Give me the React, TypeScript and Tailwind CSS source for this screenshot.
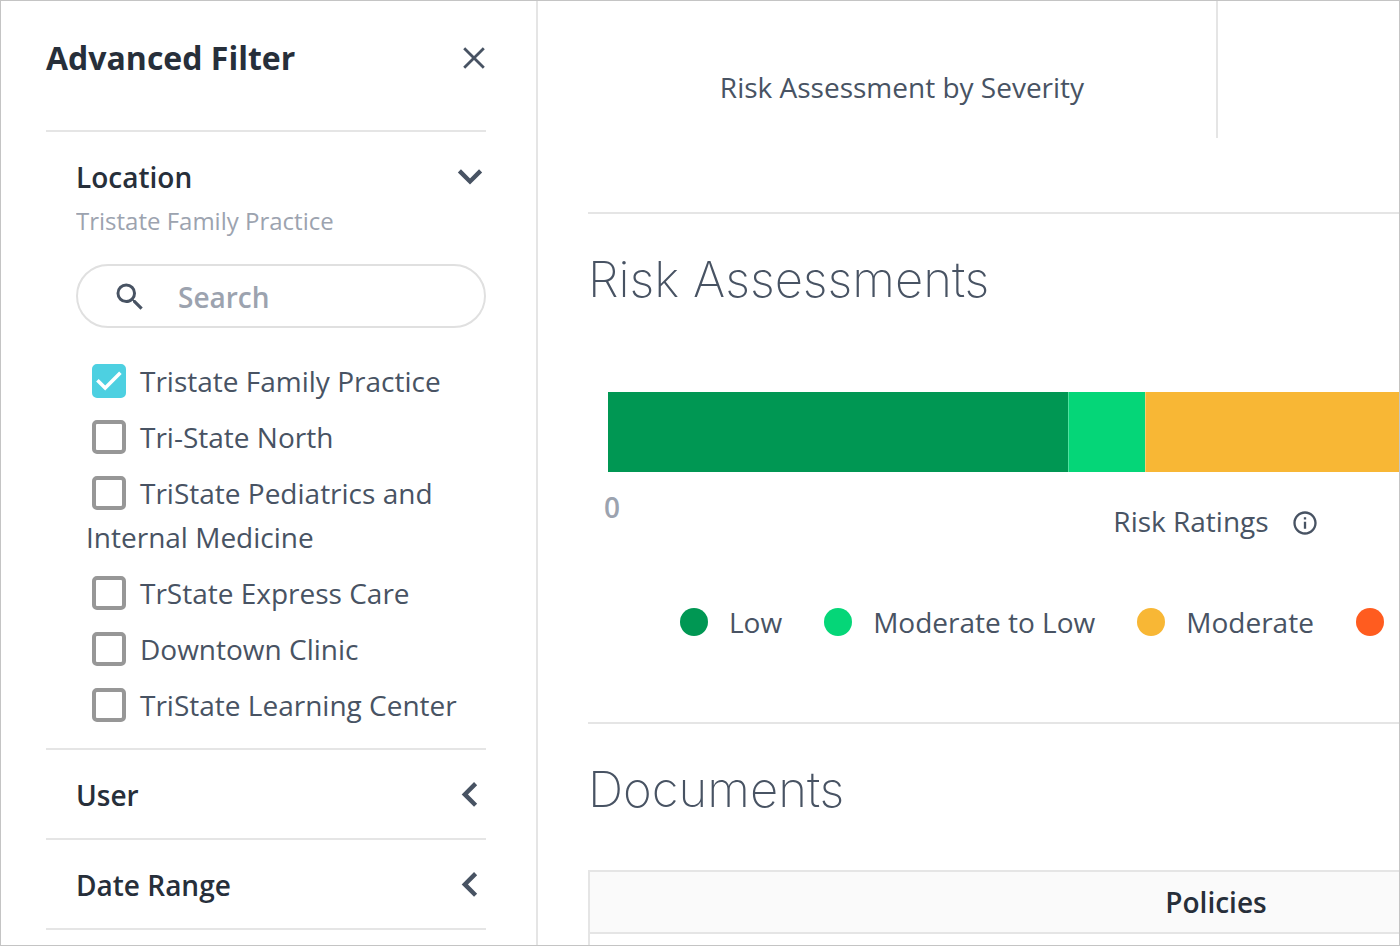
import React, { useState } from 'react';
import { MdOutlineInfo, MdSearch } from 'react-icons/md';

interface Segment {
  label: string;
  color: string;
  value: number;
}

const LOCATIONS = [
  'Tristate Family Practice',
  'Tri-State North',
  'TriState Pediatrics and Internal Medicine',
  'TrState Express Care',
  'Downtown Clinic',
  'TriState Learning Center',
];

const RATINGS: Segment[] = [
  { label: 'Low', color: '#009753', value: 460 },
  { label: 'Moderate to Low', color: '#05d678', value: 77 },
  { label: 'Moderate', color: '#f8b735', value: 460 },
  { label: '', color: '#ff5c1f', value: 219 },
];

const CloseIcon = () => (
  <svg width="24" height="24" viewBox="0 0 24 24" fill="none" stroke="currentColor" strokeWidth="2.8">
    <path d="M2.2 2.2 21.8 21.8M21.8 2.2 2.2 21.8" />
  </svg>
);

const Chevron: React.FC<{ open: boolean }> = ({ open }) => (
  <svg width="32" height="32" viewBox="0 0 32 32" fill="none" stroke="currentColor" strokeWidth="4.4">
    <path d={open ? 'M5.4 9.9 16 20.5 26.6 9.9' : 'M21.6 4.6 10.8 15.4 21.6 26.2'} />
  </svg>
);

const CheckIcon = () => (
  <svg
    width="34"
    height="34"
    viewBox="0 0 34 34"
    fill="none"
    stroke="currentColor"
    strokeWidth="3.6"
    className="pointer-events-none absolute inset-0 text-white"
  >
    <path d="M5.4 16.2 13.2 24 28.4 8.8" />
  </svg>
);

interface FilterSectionProps {
  title: string;
  open: boolean;
  onToggle: () => void;
  children?: React.ReactNode;
}

const FilterSection: React.FC<FilterSectionProps> = ({ title, open, onToggle, children }) => (
  <section className="border-b-2 border-[#e5e5e5] pl-[30px]">
    <h3>
      <button
        type="button"
        onClick={onToggle}
        aria-expanded={open}
        className={`flex w-full items-center justify-between pt-[23px] text-left text-[28px] leading-[44px] font-semibold text-[#272f3a] ${
          open ? '' : 'pb-[21px]'
        }`}
      >
        {title}
        <span className="text-[#485363]">
          <Chevron open={open} />
        </span>
      </button>
    </h3>
    {open && children}
  </section>
);

export const App: React.FC = () => {
  const [openSection, setOpenSection] = useState<string | null>('Location');
  const [selected, setSelected] = useState<string[]>(['Tristate Family Practice']);
  const [query, setQuery] = useState('');

  const total = RATINGS.reduce((sum, r) => sum + r.value, 0);
  const visible = LOCATIONS.filter((l) => l.toLowerCase().includes(query.toLowerCase()));

  const toggleSection = (name: string) => {
    setOpenSection(openSection === name ? null : name);
  };

  const toggleLocation = (name: string) => {
    setSelected(selected.includes(name) ? selected.filter((l) => l !== name) : [...selected, name]);
  };

  return (
    <div className="flex h-screen overflow-hidden border border-[#c4c4c4] bg-white font-['Open_Sans',sans-serif] text-[28px] text-[#485363]">
      {/* Filter panel */}
      <aside className="w-[537px] shrink-0 border-r-2 border-[#e5e5e5] pr-[50px] pl-[45px]">
        <div className="flex items-center justify-between border-b-2 border-[#e5e5e5] pt-[35px] pb-[50px]">
          <h2 className="text-[32px] leading-[44px] font-bold text-[#272f3a]">Advanced Filter</h2>
          <button type="button" aria-label="Close">
            <CloseIcon />
          </button>
        </div>

        <FilterSection
          title="Location"
          open={openSection === 'Location'}
          onToggle={() => toggleSection('Location')}
        >
          <p className="truncate text-2xl leading-[44px] text-[#9ca3af]">{selected.join(', ')}</p>
          <label className="mt-[21px] flex h-16 items-center gap-[30px] rounded-full border-2 border-[#e0e0e0] pt-[2px] pr-6 pl-[34px]">
            <MdSearch size={36} className="shrink-0" />
            <input
              type="text"
              aria-label="Search"
              placeholder="Search"
              value={query}
              onChange={(e) => setQuery(e.target.value)}
              className="w-full min-w-0 font-semibold outline-none placeholder:text-[#9ca3af]"
            />
          </label>
          <ul className="mt-[31px] flex flex-col gap-3 pb-[21px] pl-[10px]">
            {visible.map((name) => (
              <li key={name}>
                <label className="block leading-[44px]">
                  <span className="relative mr-[14px] ml-[6px] inline-block size-[34px] align-[-6px]">
                    <input
                      type="checkbox"
                      checked={selected.includes(name)}
                      onChange={() => toggleLocation(name)}
                      className="block size-[34px] appearance-none rounded-[5px] border-4 border-[#979797] checked:border-[#4dd0e1] checked:bg-[#4dd0e1]"
                    />
                    {selected.includes(name) && <CheckIcon />}
                  </span>
                  {name}
                </label>
              </li>
            ))}
          </ul>
        </FilterSection>

        <FilterSection title="User" open={openSection === 'User'} onToggle={() => toggleSection('User')} />
        <FilterSection
          title="Date Range"
          open={openSection === 'Date Range'}
          onToggle={() => toggleSection('Date Range')}
        />
      </aside>

      {/* Dashboard */}
      <main className="min-w-0 flex-1 overflow-hidden pl-[50px]">
        <div className="min-w-[1256px]">
          <div className="mb-[74px] grid grid-cols-2">
            <p className="pt-16 pb-[29px] text-center leading-[44px]">Risk Assessment by Severity</p>
            <div className="border-l-2 border-[#e5e5e5]" />
          </div>

          <section className="border-t-2 border-[#e5e5e5] pt-9 pb-[78px]">
            <h2 className="font-['Inter',sans-serif] text-[49px] leading-[60px] font-extralight">Risk Assessments</h2>
            <div className="mx-5 mt-[82px] flex h-20">
              {RATINGS.map((r) => (
                <div
                  key={r.color}
                  className="border-l border-white/30 first:border-l-0"
                  style={{ width: `${(r.value / total) * 100}%`, backgroundColor: r.color }}
                />
              ))}
            </div>
            <div className="grid grid-cols-[1fr_auto_1fr] items-start pt-[15px]">
              <span className="pl-4 leading-10 font-semibold text-[#9ca3af]">0</span>
              <div className="flex items-center gap-[22px] pt-[14px] leading-10">
                Risk Ratings
                <button type="button" aria-label="About risk ratings" className="pt-1">
                  <MdOutlineInfo size={28} />
                </button>
              </div>
            </div>
            <ul className="mt-[58px] flex gap-[42px] pl-[92px] leading-[44px] whitespace-nowrap">
              {RATINGS.map((r) => (
                <li key={r.color} className="flex h-[45px] items-center gap-[21px]">
                  <span className="size-7 rounded-full" style={{ backgroundColor: r.color }} />
                  {r.label}
                </li>
              ))}
            </ul>
          </section>

          <section className="border-t-2 border-[#e5e5e5] pt-9">
            <h2 className="font-['Inter',sans-serif] text-[49px] leading-[60px] font-extralight">Documents</h2>
            <table className="mt-[50px] w-full border-separate border-spacing-0 border-2 border-[#e5e5e5]">
              <thead>
                <tr>
                  <th className="h-[62px] border-b-2 border-[#e5e5e5] bg-[#fafafa] font-semibold text-[#272f3a]">
                    Policies
                  </th>
                </tr>
              </thead>
              <tbody>
                <tr>
                  <td className="h-16" />
                </tr>
              </tbody>
            </table>
          </section>
        </div>
      </main>
    </div>
  );
};

export default App;
